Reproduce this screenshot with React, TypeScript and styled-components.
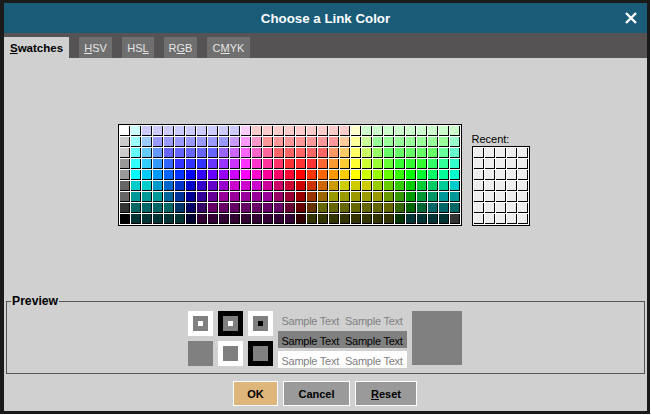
import React from 'react';
import styled, { createGlobalStyle } from 'styled-components';

const GlobalStyle = createGlobalStyle`
  html, body {
    margin: 0;
    padding: 0;
    background: #ffffff;
  }
  body {
    font-family: "Liberation Sans", Arial, sans-serif;
  }
`;

const Frame = styled.div`
  box-sizing: border-box;
  width: 650px;
  height: 414px;
  border: 3px solid #1a1a1a;
  border-left-width: 4px;
  display: flex;
  flex-direction: column;
  background: #d0d0d0;
`;

const TitleBar = styled.div`
  position: relative;
  height: 30px;
  flex: none;
  background: #1a5b78;
  color: #ffffff;
  font-size: 13.3px;
  font-weight: bold;
  display: flex;
  align-items: center;
  justify-content: center;
`;

const CloseButton = styled.svg`
  position: absolute;
  right: 10px;
  top: 9px;
  width: 12px;
  height: 12px;
`;

const TabBar = styled.div`
  height: 25px;
  flex: none;
  background: #555353;
  display: flex;
  align-items: flex-end;
`;

const Tab = styled.div<{ $active?: boolean; $w: number }>`
  box-sizing: border-box;
  width: ${(p) => p.$w}px;
  height: 21px;
  margin-right: 10px;
  background: ${(p) => (p.$active ? '#d0d0d0' : '#6f6f6f')};
  color: ${(p) => (p.$active ? '#000000' : '#e6e6e6')};
  font-size: ${(p) => (p.$active ? '11.5px' : '11px')};
  font-weight: ${(p) => (p.$active ? 'bold' : 'normal')};
  display: flex;
  align-items: center;
  justify-content: center;
`;

const SwatchArea = styled.div`
  flex: 1;
  display: flex;
  justify-content: center;
  align-items: center;
  padding: 0 4px 2px 0;
`;

const SwatchRow = styled.div`
  display: flex;
  align-items: flex-end;
  gap: 10px;
`;

const SwatchGrid = styled.div<{ $cols: number }>`
  display: grid;
  grid-template-columns: repeat(${(p) => p.$cols}, 10px);
  grid-auto-rows: 10px;
  gap: 1px;
  padding: 1px;
  border: 1px solid #000000;
  background: #ffffff;
`;

const Swatch = styled.div<{ $c: string }>`
  box-sizing: border-box;
  background: ${(p) => p.$c};
  border-right: 1px solid #000000;
  border-bottom: 1px solid #000000;
`;

const RecentColumn = styled.div`
  display: flex;
  flex-direction: column;
`;

const RecentLabel = styled.div`
  font-size: 11px;
  line-height: 13px;
  color: #000000;
`;

const PreviewBox = styled.fieldset`
  box-sizing: border-box;
  height: 80px;
  flex: none;
  margin: 0 2px;
  padding: 0;
  border: 1px solid #555555;
  display: flex;
  justify-content: center;
`;

const PreviewLegend = styled.legend`
  margin-left: 4px;
  padding: 0 1px;
  font-size: 12.2px;
  line-height: 14px;
  font-weight: bold;
  color: #000000;
`;

const PreviewContent = styled.div`
  display: flex;
  align-items: flex-start;
  gap: 5px;
  padding: 3px 2px 0 0;
`;

const SquareGrid = styled.div`
  display: grid;
  grid-template-columns: repeat(3, 25px);
  grid-template-rows: repeat(2, 25px);
  gap: 5px;
`;

const Square = styled.div<{ $outer: string }>`
  width: 25px;
  height: 25px;
  background: ${(p) => p.$outer};
  display: flex;
  align-items: center;
  justify-content: center;
`;

const SquareInner = styled.div`
  width: 15px;
  height: 15px;
  background: #808080;
  display: flex;
  align-items: center;
  justify-content: center;
`;

const SquareDot = styled.div<{ $c: string }>`
  width: 5px;
  height: 5px;
  background: ${(p) => p.$c};
`;

const SampleColumn = styled.div`
  display: flex;
  flex-direction: column;
  gap: 3px;
  width: 129px;
`;

const SampleRow = styled.div<{ $bg: string; $fg: string }>`
  box-sizing: border-box;
  flex: none;
  height: 17px;
  padding-top: 3px;
  background: ${(p) => p.$bg};
  color: ${(p) => p.$fg};
  font-size: 11px;
  letter-spacing: -0.25px;
  display: flex;
  align-items: center;
  justify-content: center;
  gap: 6px;
  white-space: nowrap;
`;

const BigSwatch = styled.div`
  width: 50px;
  height: 54px;
  background: #808080;
`;

const ButtonRow = styled.div`
  height: 37px;
  flex: none;
  display: flex;
  justify-content: center;
  align-items: center;
  gap: 5px;
  padding: 2px 1px 0 0;
  box-sizing: border-box;
`;

const Button = styled.button<{ $primary?: boolean; $w: number }>`
  box-sizing: border-box;
  width: ${(p) => p.$w}px;
  height: 25px;
  padding: 0;
  border: 1px solid #ffffff;
  background: ${(p) => (p.$primary ? '#deb57a' : '#9a9a9a')};
  color: #000000;
  font-family: "Liberation Sans", Arial, sans-serif;
  font-size: 11px;
  font-weight: bold;
`;

const raw = `255,255,255 204,255,255 204,204,255 204,204,255 204,204,255 204,204,255 204,204,255 204,204,255 204,204,255 204,204,255 204,204,255 255,204,255 255,204,204 255,204,204 255,204,204 255,204,204 255,204,204 255,204,204 255,204,204 255,204,204 255,204,204 255,255,204 204,255,204 204,255,204 204,255,204 204,255,204 204,255,204 204,255,204 204,255,204 204,255,204 204,255,204
204,204,204 153,255,255 153,204,255 153,153,255 153,153,255 153,153,255 153,153,255 153,153,255 153,153,255 153,153,255 204,153,255 255,153,255 255,153,204 255,153,153 255,153,153 255,153,153 255,153,153 255,153,153 255,153,153 255,153,153 255,204,153 255,255,153 204,255,153 153,255,153 153,255,153 153,255,153 153,255,153 153,255,153 153,255,153 153,255,153 153,255,204
204,204,204 102,255,255 102,204,255 102,153,255 102,102,255 102,102,255 102,102,255 102,102,255 102,102,255 153,102,255 204,102,255 255,102,255 255,102,204 255,102,153 255,102,102 255,102,102 255,102,102 255,102,102 255,102,102 255,153,102 255,204,102 255,255,102 204,255,102 153,255,102 102,255,102 102,255,102 102,255,102 102,255,102 102,255,102 102,255,153 102,255,204
153,153,153 51,255,255 51,204,255 51,153,255 51,102,255 51,51,255 51,51,255 51,51,255 102,51,255 153,51,255 204,51,255 255,51,255 255,51,204 255,51,153 255,51,102 255,51,51 255,51,51 255,51,51 255,102,51 255,153,51 255,204,51 255,255,51 204,255,51 153,255,51 102,255,51 51,255,51 51,255,51 51,255,51 51,255,102 51,255,153 51,255,204
153,153,153 0,255,255 0,204,255 0,153,255 0,102,255 0,51,255 0,0,255 51,0,255 102,0,255 153,0,255 204,0,255 255,0,255 255,0,204 255,0,153 255,0,102 255,0,51 255,0,0 255,51,0 255,102,0 255,153,0 255,204,0 255,255,0 204,255,0 153,255,0 102,255,0 51,255,0 0,255,0 0,255,51 0,255,102 0,255,153 0,255,204
102,102,102 0,204,204 0,204,204 0,153,204 0,102,204 0,51,204 0,0,204 51,0,204 102,0,204 153,0,204 204,0,204 204,0,204 204,0,204 204,0,153 204,0,102 204,0,51 204,0,0 204,51,0 204,102,0 204,153,0 204,204,0 204,204,0 204,204,0 153,204,0 102,204,0 51,204,0 0,204,0 0,204,51 0,204,102 0,204,153 0,204,204
102,102,102 0,153,153 0,153,153 0,153,153 0,102,153 0,51,153 0,0,153 51,0,153 102,0,153 153,0,153 153,0,153 153,0,153 153,0,153 153,0,153 153,0,102 153,0,51 153,0,0 153,51,0 153,102,0 153,153,0 153,153,0 153,153,0 153,153,0 153,153,0 102,153,0 51,153,0 0,153,0 0,153,51 0,153,102 0,153,153 0,153,153
51,51,51 0,102,102 0,102,102 0,102,102 0,102,102 0,51,102 0,0,102 51,0,102 102,0,102 102,0,102 102,0,102 102,0,102 102,0,102 102,0,102 102,0,102 102,0,51 102,0,0 102,51,0 102,102,0 102,102,0 102,102,0 102,102,0 102,102,0 102,102,0 102,102,0 51,102,0 0,102,0 0,102,51 0,102,102 0,102,102 0,102,102
0,0,0 0,51,51 0,51,51 0,51,51 0,51,51 0,51,51 0,0,51 51,0,51 51,0,51 51,0,51 51,0,51 51,0,51 51,0,51 51,0,51 51,0,51 51,0,51 51,0,0 51,51,0 51,51,0 51,51,0 51,51,0 51,51,0 51,51,0 51,51,0 51,51,0 0,51,0 0,51,51 0,51,51 0,51,51 0,51,51 51,51,51`;

const swatches = raw.split(/\s+/).map((c) => `rgb(${c})`);
const recent = Array.from({ length: 35 }, () => '#eeeeee');

const App: React.FC = () => {
  return (
    <Frame>
      <GlobalStyle />
      <TitleBar>
        Choose a Link Color
        <CloseButton viewBox="0 0 12 12">
          <path d="M1 1 L11 11 M11 1 L1 11" stroke="#ffffff" strokeWidth="2.4" fill="none" />
        </CloseButton>
      </TitleBar>
      <TabBar>
        <Tab $active $w={65}><span><u>S</u>watches</span></Tab>
        <Tab $w={33}><span><u>H</u>SV</span></Tab>
        <Tab $w={32}><span>HS<u>L</u></span></Tab>
        <Tab $w={33}><span>R<u>G</u>B</span></Tab>
        <Tab $w={43}><span>C<u>M</u>YK</span></Tab>
      </TabBar>
      <SwatchArea>
        <SwatchRow>
          <SwatchGrid $cols={31}>
            {swatches.map((c, i) => (
              <Swatch key={i} $c={c} />
            ))}
          </SwatchGrid>
          <RecentColumn>
            <RecentLabel>Recent:</RecentLabel>
            <SwatchGrid $cols={5}>
              {recent.map((c, i) => (
                <Swatch key={i} $c={c} />
              ))}
            </SwatchGrid>
          </RecentColumn>
        </SwatchRow>
      </SwatchArea>
      <PreviewBox>
        <PreviewLegend>Preview</PreviewLegend>
        <PreviewContent>
          <SquareGrid>
            <Square $outer="#ffffff"><SquareInner><SquareDot $c="#ffffff" /></SquareInner></Square>
            <Square $outer="#000000"><SquareInner><SquareDot $c="#ffffff" /></SquareInner></Square>
            <Square $outer="#ffffff"><SquareInner><SquareDot $c="#000000" /></SquareInner></Square>
            <Square $outer="#808080" />
            <Square $outer="#ffffff"><SquareInner /></Square>
            <Square $outer="#000000"><SquareInner /></Square>
          </SquareGrid>
          <SampleColumn>
            <SampleRow $bg="transparent" $fg="#808080"><span>Sample Text</span><span>Sample Text</span></SampleRow>
            <SampleRow $bg="#808080" $fg="#000000"><span>Sample Text</span><span>Sample Text</span></SampleRow>
            <SampleRow $bg="#ffffff" $fg="#808080"><span>Sample Text</span><span>Sample Text</span></SampleRow>
          </SampleColumn>
          <BigSwatch />
        </PreviewContent>
      </PreviewBox>
      <ButtonRow>
        <Button $primary $w={45}>OK</Button>
        <Button $w={67}>Cancel</Button>
        <Button $w={62}><u>R</u>eset</Button>
      </ButtonRow>
    </Frame>
  );
};

export default App;
